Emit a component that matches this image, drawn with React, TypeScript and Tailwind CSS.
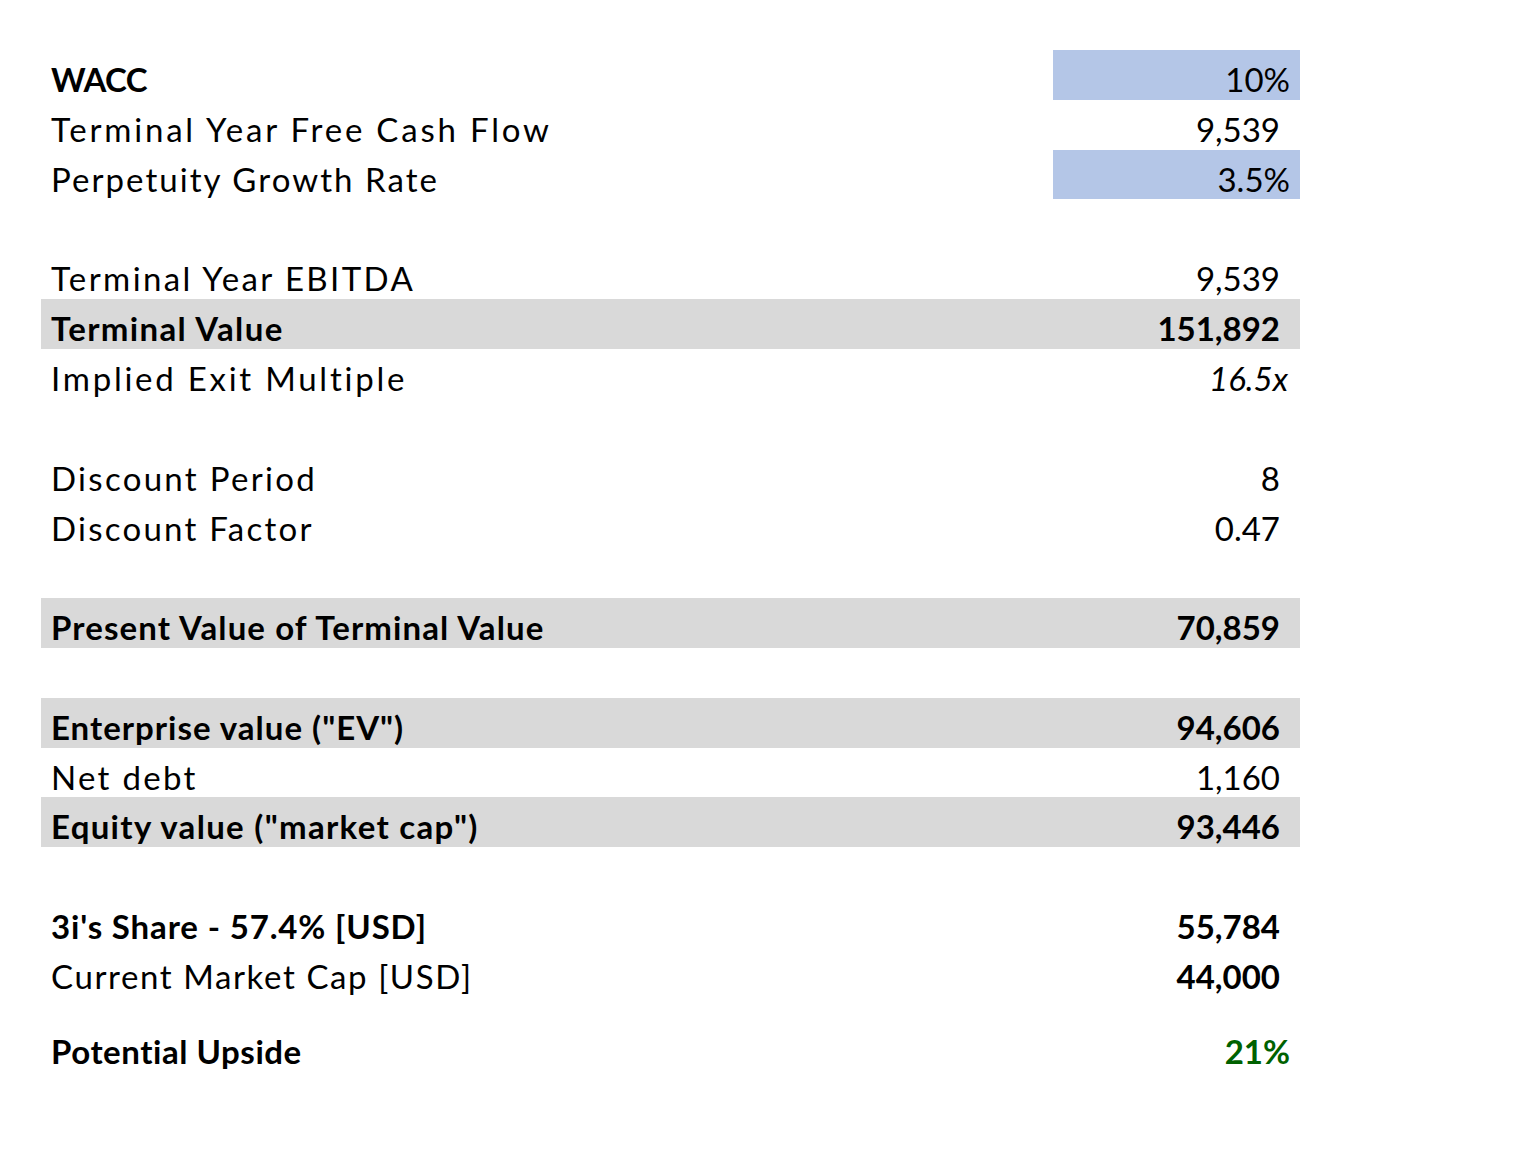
import clsx from "clsx";

type Row = {
  label?: string;
  value?: string;
  bold?: boolean;
  valueBold?: boolean;
  italic?: boolean;
  gray?: boolean;
  blue?: boolean;
  pct?: boolean;
  green?: boolean;
  h?: string;
  track?: string;
};

// spreadsheet rows, top to bottom
const rows: Row[] = [
  { label: "WACC", value: "10%", bold: true, blue: true, pct: true, track: "tracking-[-0.6px]" },
  { label: "Terminal Year Free Cash Flow", value: "9,539", track: "tracking-[2.8px]" },
  { label: "Perpetuity Growth Rate", value: "3.5%", blue: true, pct: true, h: "h-[49px]", track: "tracking-[2.05px]" },
  {},
  { label: "Terminal Year EBITDA", value: "9,539", track: "tracking-[2.4px]" },
  { label: "Terminal Value", value: "151,892", bold: true, valueBold: true, gray: true, track: "tracking-[1.35px]" },
  { label: "Implied Exit Multiple", value: "16.5x", italic: true, pct: true, track: "tracking-[2.75px]" },
  {},
  { label: "Discount Period", value: "8", track: "tracking-[2.3px]" },
  { label: "Discount Factor", value: "0.47", h: "h-[49px]", track: "tracking-[2.25px]" },
  {},
  {
    label: "Present Value of Terminal Value",
    value: "70,859",
    bold: true,
    valueBold: true,
    gray: true,
    track: "tracking-[1.1px]",
  },
  {},
  { label: 'Enterprise value ("EV")', value: "94,606", bold: true, valueBold: true, gray: true, track: "tracking-[1px]" },
  { label: "Net debt", value: "1,160", h: "h-[49px]", track: "tracking-[2.3px]" },
  {
    label: 'Equity value ("market cap")',
    value: "93,446",
    bold: true,
    valueBold: true,
    gray: true,
    track: "tracking-[1.3px]",
  },
  {},
  { label: "3i's Share - 57.4% [USD]", value: "55,784", bold: true, valueBold: true, track: "tracking-[0.85px]" },
  { label: "Current Market Cap [USD]", value: "44,000", valueBold: true, track: "tracking-[1.6px]" },
  { h: "h-[25px]" },
  {
    label: "Potential Upside",
    value: "21%",
    bold: true,
    valueBold: true,
    pct: true,
    green: true,
    track: "tracking-[0.55px]",
  },
];

export default function App() {
  return (
    <div className="min-h-[1166px] bg-white pt-[50px] pl-[41px] font-['Lato',sans-serif] text-[33px] text-black">
      <div className="w-[1259px]">
        {rows.map((row, i) => (
          <div key={i} className={clsx("flex", row.h ?? "h-[50px]", row.gray && "bg-[#d9d9d9]")}>
            <div
              className={clsx(
                "flex-1 pl-[10px] pt-[8px] leading-[42px] whitespace-nowrap",
                row.bold && "font-bold",
                row.track,
              )}
            >
              {row.label}
            </div>
            <div
              className={clsx(
                "w-[247px] pt-[8px] text-right leading-[42px]",
                row.pct ? "pr-[10px]" : "pr-[20px]",
                row.blue && "bg-[#b4c6e7]",
                row.valueBold && "font-bold",
                row.italic && "italic pr-[12px]",
                row.green && "text-[#006100]",
              )}
            >
              {row.value}
            </div>
          </div>
        ))}
      </div>
    </div>
  );
}
